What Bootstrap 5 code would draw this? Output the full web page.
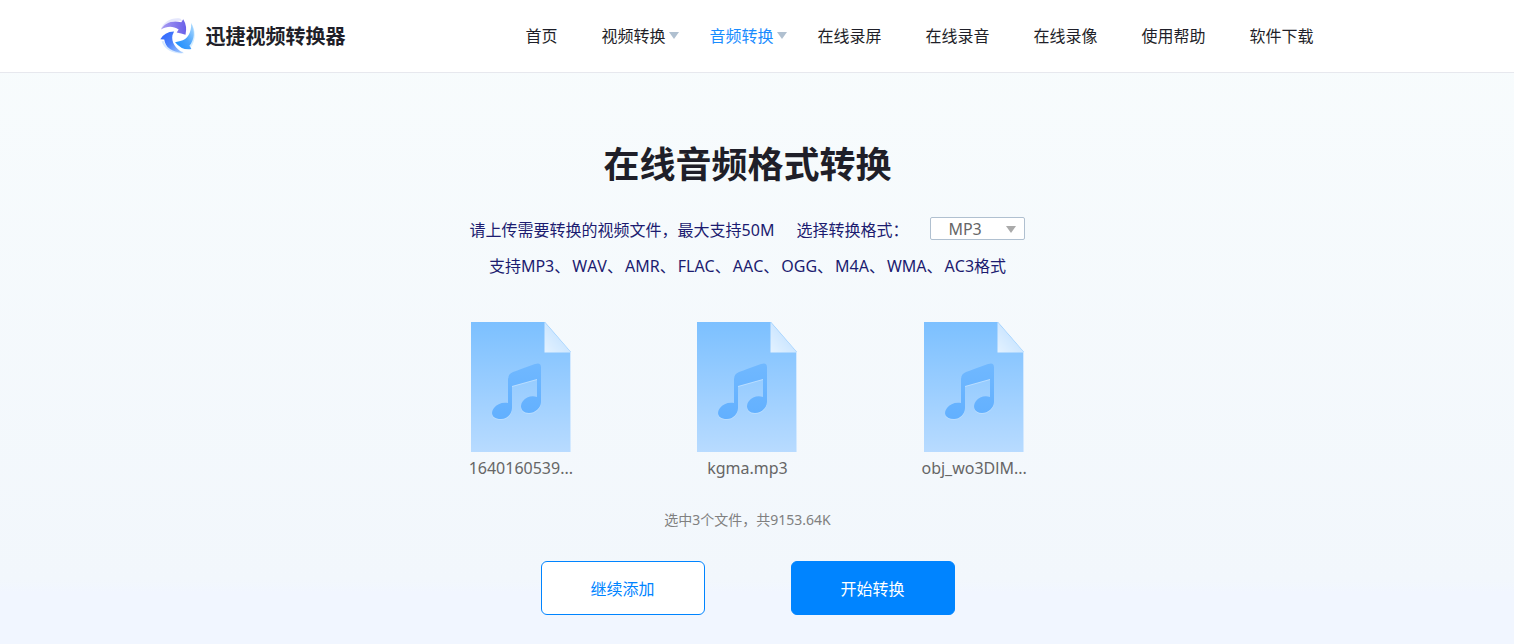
<!DOCTYPE html>
<html lang="zh-CN">
<head>
<meta charset="utf-8">
<meta name="viewport" content="width=device-width, initial-scale=1">
<title>在线音频格式转换</title>
<link href="https://cdn.jsdelivr.net/npm/bootstrap@5.3.0/dist/css/bootstrap.min.css" rel="stylesheet">
<style>
  body {
    font-family: "Noto Sans", "Noto Sans CJK SC", sans-serif;
    font-size: 16px;
    line-height: 24px;
    font-kerning: none;
    color: #1f1f29;
    background: linear-gradient(#f8fcfd, #f2f7fc 90%, #f1f6ff 92%);
  }
  .page-wrap { padding-right: 19px; }
  .site-header { border-bottom: 1px solid #e7e8ee; }
  .site-inner { max-width: 1200px; min-height: 72px; padding: 0 12px; }
  .brand-link { gap: 10px; }
  .brand-name { font-size: 20px; font-weight: 700; color: #1f1f29; padding-top: 1px; }
  .site-nav .nav-link { padding: 12px 22px; color: #1f1f29; white-space: nowrap; }
  .site-nav .nav-link.active { color: #1a8cff; }
  .has-menu { position: relative; }
  .has-menu::after {
    content: "";
    position: absolute;
    right: 8px;
    top: 20px;
    border: 5px solid transparent;
    border-top: 7px solid #b0c0d0;
    border-bottom: 0;
  }
  .tool-title { font-size: 36px; line-height: 48px; font-weight: 700; margin-top: 68px; margin-bottom: 28px; }
  .tool-hint { color: #1c1c70; min-height: 24px; }
  .format-label { margin-left: 22px; }
  .format-list { column-gap: 2px; }
  .format-box { position: relative; width: 95px; margin-left: 22px; margin-bottom: 2px; }
  .format-box::after {
    content: "";
    position: absolute;
    right: 9px;
    top: 9px;
    border: 5px solid transparent;
    border-top: 7px solid #aaa;
    border-bottom: 0;
    pointer-events: none;
  }
  .format-select {
    appearance: none;
    width: 100%;
    height: 23px;
    padding: 1px 17px 0;
    line-height: 20px;
    color: #666;
    background: #fff;
    border: 1px solid #b0c0d0;
    border-radius: 2px;
  }
  .file-list { max-width: 680px; margin-top: 44px; }
  .file-name { max-width: 112px; line-height: 32px; color: #666; }
  .file-total { font-size: 14px; color: #808080; margin-top: 24px; margin-bottom: 29px; }
  .actions { column-gap: 86px; row-gap: 16px; padding-bottom: 29px; }
  .action-btn {
    --bs-btn-color: #0084ff;
    --bs-btn-bg: #fff;
    --bs-btn-border-color: #0084ff;
    --bs-btn-hover-color: #fff;
    --bs-btn-hover-bg: #0084ff;
    --bs-btn-hover-border-color: #0084ff;
    width: 164px;
    height: 54px;
    padding-top: 8px;
    border-radius: 6px;
  }
  .action-main { --bs-btn-color: #fff; --bs-btn-bg: #0084ff; }
</style>
</head>
<body class="min-vh-100">

<svg width="0" height="0" class="position-absolute" aria-hidden="true">
  <defs>
    <linearGradient id="sheet" x1="0" y1="0" x2="0" y2="1"><stop stop-color="#7cc0ff"/><stop offset="1" stop-color="#b8dbff"/></linearGradient>
    <linearGradient id="fold" x1="1" y1="0" x2="0" y2="1"><stop stop-color="#b8dcff"/><stop offset="1" stop-color="#e4f2ff"/></linearGradient>
    <linearGradient id="note" x1="0" y1="0" x2="0" y2="1"><stop stop-color="#70b8ff"/><stop offset="1" stop-color="#62b0ff"/></linearGradient>
    <symbol id="audio-file" viewBox="0 0 100 130">
      <path d="M0 0h74l26 30v100H0z" fill="url(#sheet)"/>
      <path d="M99.500 30v100" stroke="#d3e9ff"/>
      <path d="M73.500 0L100 30.500H73.500z" fill="url(#fold)"/>
      <path d="M42 50Q50 47 64 42Q70 40 70 45V80C70 86 64 91 58 91C50 91 48 84 52 79C55 75 61 73 66 75V57L41 64V86C41 92 36 97 30 97C21 97 19 91 23 86C26 82 31 80 37 81V57Q37 52 42 50z" transform="translate(0 1)" fill="#b9ddff"/>
      <path d="M42 50Q50 47 64 42Q70 40 70 45V80C70 86 64 91 58 91C50 91 48 84 52 79C55 75 61 73 66 75V57L41 64V86C41 92 36 97 30 97C21 97 19 91 23 86C26 82 31 80 37 81V57Q37 52 42 50z" fill="url(#note)"/>
    </symbol>
  </defs>
</svg>

<header class="site-header page-wrap bg-white">
  <div class="site-inner mx-auto d-flex flex-wrap align-items-center justify-content-between">
    <a href="#" class="brand-link d-flex align-items-center text-decoration-none">
      <svg width="36" height="36" viewBox="60 53 108 110" aria-hidden="true">
        <defs>
          <linearGradient id="violet" x1="0" x2="1"><stop stop-color="#a99bf2"/><stop offset="1" stop-color="#6960e8"/></linearGradient>
          <linearGradient id="royal" x1="0" y1="0" x2="1" y2="1"><stop stop-color="#2d62ff"/><stop offset=".5" stop-color="#4c82fb"/><stop offset="1" stop-color="#a8d0ff"/></linearGradient>
          <linearGradient id="azure" x1="0" y1="1" x2="1" y2="0"><stop stop-color="#168dff"/><stop offset=".5" stop-color="#49a2fc"/><stop offset="1" stop-color="#b9e2ff"/></linearGradient>
        </defs>
        <path d="M61 88C70 65 95 50 122 55L127 62C98 59 76 68 61 88z" fill="#e4e6fc"/>
        <path d="M62 88C73 69 94 59 124 66L130 57Q143 78 137 104Q124 100 110 97L116 88C99 77 81 77 62 88z" fill="url(#violet)"/>
        <path d="M64 124C71 148 97 164 132 161L127 155C99 156 78 145 70 123z" fill="#d5e8ff"/>
        <path d="M60 118Q72 95 102 94L97 106C93 127 106 146 130 160C94 158 75 142 72 119z" fill="url(#royal)"/>
        <path d="M153 66C170 91 169 124 151 146L148 137C161 115 162 90 153 66z" fill="#d3edff"/>
        <path d="M154 69C168 94 164 119 149 138L155 148Q126 153 105 127L121 123C143 120 156 96 154 69z" fill="url(#azure)"/>
      </svg>
      <span class="brand-name">迅捷视频转换器</span>
    </a>
    <nav aria-label="主导航">
      <ul class="nav site-nav">
        <li class="nav-item"><a class="nav-link" href="#">首页</a></li>
        <li class="nav-item"><a class="nav-link has-menu" href="#">视频转换</a></li>
        <li class="nav-item"><a class="nav-link has-menu active" aria-current="page" href="#">音频转换</a></li>
        <li class="nav-item"><a class="nav-link" href="#">在线录屏</a></li>
        <li class="nav-item"><a class="nav-link" href="#">在线录音</a></li>
        <li class="nav-item"><a class="nav-link" href="#">在线录像</a></li>
        <li class="nav-item"><a class="nav-link" href="#">使用帮助</a></li>
        <li class="nav-item"><a class="nav-link" href="#">软件下载</a></li>
      </ul>
    </nav>
  </div>
</header>

<main class="page-wrap d-flex flex-column align-items-center text-center">
  <h1 class="tool-title">在线音频格式转换</h1>
  <div class="tool-hint d-flex flex-wrap align-items-center justify-content-center">
    <span>请上传需要转换的视频文件，最大支持50M</span>
    <label for="format" class="format-label">选择转换格式：</label>
    <div class="format-box">
      <select id="format" class="format-select d-block">
        <option>MP3</option><option>WAV</option><option>AMR</option><option>FLAC</option><option>AAC</option><option>OGG</option><option>M4A</option><option>WMA</option><option>AC3</option>
      </select>
    </div>
  </div>
  <p class="tool-hint format-list d-flex flex-wrap justify-content-center mt-2 pt-1 mb-0">
    <span>支持MP3、</span><span>WAV、</span><span>AMR、</span><span>FLAC、</span><span>AAC、</span><span>OGG、</span><span>M4A、</span><span>WMA、</span><span>AC3格式</span>
  </p>

  <div class="file-list row g-0 w-100">
    <div class="col-4">
      <svg width="100" height="130" class="d-block mx-auto" aria-hidden="true"><use href="#audio-file"/></svg>
      <div class="file-name mx-auto">1640160539...</div>
    </div>
    <div class="col-4">
      <svg width="100" height="130" class="d-block mx-auto" aria-hidden="true"><use href="#audio-file"/></svg>
      <div class="file-name mx-auto">kgma.mp3</div>
    </div>
    <div class="col-4">
      <svg width="100" height="130" class="d-block mx-auto" aria-hidden="true"><use href="#audio-file"/></svg>
      <div class="file-name mx-auto">obj_wo3DlM...</div>
    </div>
  </div>

  <p class="file-total">选中3个文件，共9153.64K</p>
  <div class="actions d-flex flex-wrap justify-content-center">
    <button type="button" class="btn action-btn">继续添加</button>
    <button type="button" class="btn action-btn action-main">开始转换</button>
  </div>
</main>

<script src="https://cdn.jsdelivr.net/npm/bootstrap@5.3.0/dist/js/bootstrap.bundle.min.js"></script>
</body>
</html>
